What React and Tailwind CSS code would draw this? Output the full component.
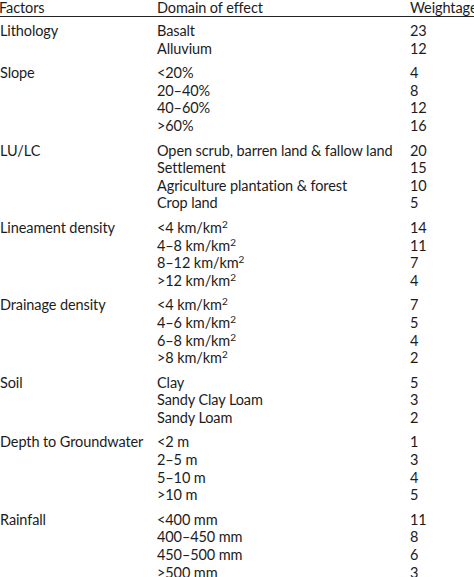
const groups = [
  { factor: "Lithology", rows: [["Basalt", "23"], ["Alluvium", "12"]] },
  { factor: "Slope", rows: [["<20%", "4"], ["20–40%", "8"], ["40–60%", "12"], [">60%", "16"]] },
  {
    factor: "LU/LC",
    rows: [
      ["Open scrub, barren land & fallow land", "20"],
      ["Settlement", "15"],
      ["Agriculture plantation & forest", "10"],
      ["Crop land", "5"],
    ],
  },
  { factor: "Lineament density", rows: [["<4 ", "14", true], ["4–8 ", "11", true], ["8–12 ", "7", true], [">12 ", "4", true]] },
  { factor: "Drainage density", rows: [["<4 ", "7", true], ["4–6 ", "5", true], ["6–8 ", "4", true], [">8 ", "2", true]] },
  { factor: "Soil", rows: [["Clay", "5"], ["Sandy Clay Loam", "3"], ["Sandy Loam", "2"]] },
  { factor: "Depth to Groundwater", rows: [["<2 m", "1"], ["2–5 m", "3"], ["5–10 m", "4"], [">10 m", "5"]] },
  { factor: "Rainfall", rows: [["<400 mm", "11"], ["400–450 mm", "8"], ["450–500 mm", "6"], [">500 mm", "3"]] },
];

export default function App() {
  return (
    <div
      className="w-[474px] h-[577px] overflow-hidden bg-white text-[#1c1c1c] text-[14.5px] tracking-[-0.1px]"
      style={{ fontFamily: 'Lato, sans-serif' }}
    >
      {/* Header */}
      <div className="grid grid-cols-[157px_253px_1fr] h-[18px] border-b border-[#222] leading-[17.6px] -mt-[1px] whitespace-nowrap">
        <div className="-ml-[1px]">Factors</div>
        <div>Domain of effect</div>
        <div>Weightage</div>
      </div>

      <div className="flex flex-col gap-[7px] pt-[5px]">
        {groups.map((g) => (
          <div key={g.factor} className="grid grid-cols-[157px_253px_1fr] leading-[17.6px] whitespace-nowrap">
            <div>{g.factor}</div>
            <div className="flex flex-col">
              {g.rows.map(([d, , km], i) => (
                <div key={i} className="h-[17.6px]">
                  {km ? (
                    <>
                      {d}km/km<sup className="text-[10px]">2</sup>
                    </>
                  ) : (
                    d
                  )}
                </div>
              ))}
            </div>
            <div className="flex flex-col">
              {g.rows.map(([, w], i) => (
                <div key={i} className="h-[17.6px]">
                  {w}
                </div>
              ))}
            </div>
          </div>
        ))}
      </div>
    </div>
  );
}
